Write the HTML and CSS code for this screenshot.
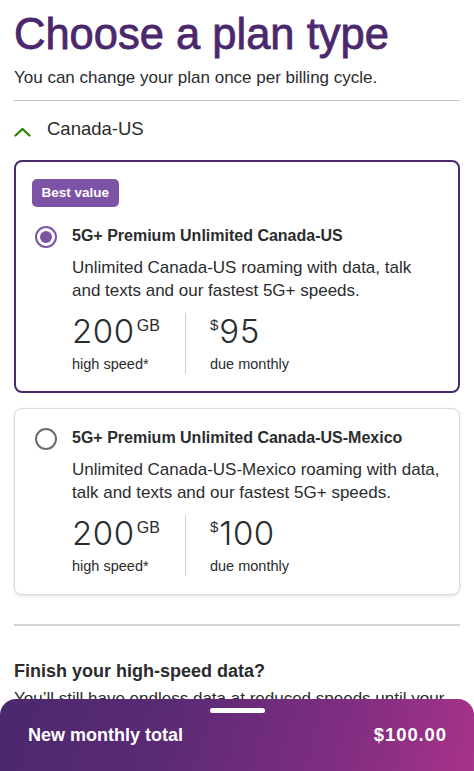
FILE: index.html
```html
<!DOCTYPE html>
<html lang="en">
<head>
<meta charset="utf-8">
<title>Choose a plan type</title>
<link rel="stylesheet" href="styles.css">
</head>
<body>
<main class="page">
  <h1 class="title">Choose a plan type</h1>
  <p class="subtitle">You can change your plan once per billing cycle.</p>
  <hr class="rule">
  <div class="acc-head">
    <svg class="chev" width="18" height="24" viewBox="0 0 18 24" aria-hidden="true">
      <path d="M1.5 18.5 L8.5 12 L15.5 18.5" fill="none" stroke="#2b8000" stroke-width="2.2" stroke-linecap="round" stroke-linejoin="round"/>
    </svg>
    <span class="acc-label">Canada-US</span>
  </div>

  <section class="card card-selected">
    <span class="badge">Best value</span>
    <div class="plan-row">
      <span class="radio radio-on"><span class="dot"></span></span>
      <div class="plan-body">
        <div class="plan-name">5G+ Premium Unlimited Canada-US</div>
        <p class="plan-desc">Unlimited Canada-US roaming with data, talk and texts and our fastest 5G+ speeds.</p>
        <div class="stats">
          <div class="stat stat-data">
            <div class="num">200<sup class="unit">GB</sup></div>
            <div class="lbl">high speed*</div>
          </div>
          <div class="stat stat-price">
            <div class="num"><sup class="cur">$</sup>95</div>
            <div class="lbl">due monthly</div>
          </div>
        </div>
      </div>
    </div>
  </section>

  <section class="card card-plain">
    <div class="plan-row">
      <span class="radio radio-off"></span>
      <div class="plan-body">
        <div class="plan-name">5G+ Premium Unlimited Canada-US-Mexico</div>
        <p class="plan-desc">Unlimited Canada-US-Mexico roaming with data, talk and texts and our fastest 5G+ speeds.</p>
        <div class="stats">
          <div class="stat stat-data">
            <div class="num">200<sup class="unit">GB</sup></div>
            <div class="lbl">high speed*</div>
          </div>
          <div class="stat stat-price">
            <div class="num"><sup class="cur">$</sup>100</div>
            <div class="lbl">due monthly</div>
          </div>
        </div>
      </div>
    </div>
  </section>

  <hr class="rule rule-thick">

  <h2 class="section-title">Finish your high-speed data?</h2>
  <p class="section-text">You’ll still have endless data at reduced speeds until your</p>
</main>

<footer class="sheet">
  <span class="handle"></span>
  <div class="sheet-row">
    <span class="sheet-label">New monthly total</span>
    <span class="sheet-total">$100.00</span>
  </div>
</footer>
</body>
</html>
```

FILE: styles.css
```css
* { box-sizing: border-box; }

html, body {
  margin: 0;
  padding: 0;
  background: #ffffff;
  overflow: hidden;
  height: 100%;
}

body {
  font-family: "Liberation Sans", Arial, sans-serif;
  color: #2a2c2e;
}

.page {
  padding: 0 14px;
}

.title {
  margin: 8px 0 0;
  font-size: 43.5px;
  line-height: 52px;
  font-weight: 400;
  color: #4b286d;
  -webkit-text-stroke: 0.8px #4b286d;
}

.subtitle {
  margin: 6px 0 0;
  font-size: 17px;
  line-height: 24px;
  color: #2a2c2e;
}

.rule {
  margin: 10px 0 0;
  border: 0;
  height: 1px;
  background: #c4c4c4;
}

.rule-thick {
  margin-top: 29px;
  height: 2px;
  background: #d4d4d4;
}

.acc-head {
  display: flex;
  align-items: center;
  gap: 15px;
  padding: 16px 0 19px;
}

.chev {
  display: block;
  flex: none;
}

.acc-label {
  font-size: 18.5px;
  line-height: 24px;
  color: #2a2c2e;
}

.card {
  border-radius: 8px;
  background: #fff;
}

.card-selected {
  border: 2px solid #4b286d;
  padding: 17px 16px 17px;
}

.card-plain {
  margin-top: 15px;
  border: 1px solid #dcdcdc;
  box-shadow: 0 1px 3px rgba(0, 0, 0, 0.14);
  padding: 17px 17px 18px;
}

.badge {
  display: inline-block;
  height: 28px;
  padding: 0 9.5px;
  border-radius: 5px;
  background: #7c53a5;
  color: #fff;
  font-size: 13.5px;
  font-weight: 700;
  line-height: 28px;
  margin-bottom: 17px;
}

.plan-row {
  display: flex;
  align-items: flex-start;
  gap: 15px;
}

.radio {
  flex: none;
  width: 22px;
  height: 22px;
  margin: 2px 0 0 3px;
  border-radius: 50%;
  display: flex;
  align-items: center;
  justify-content: center;
}

.radio-on {
  border: 2px solid #7c53a5;
}

.radio-on .dot {
  width: 12px;
  height: 12px;
  border-radius: 50%;
  background: #7c53a5;
}

.radio-off {
  border: 2px solid #6b6b6b;
}

.plan-body {
  flex: 1;
  min-width: 0;
}

.plan-name {
  font-size: 16px;
  line-height: 24px;
  font-weight: 700;
  color: #2a2c2e;
}

.plan-desc {
  margin: 8px 0 0;
  font-size: 17px;
  line-height: 23px;
  color: #2a2c2e;
}

.stats {
  display: flex;
  margin-top: 11px;
}

.stat {
  display: flex;
  flex-direction: column;
}

.stat-data {
  padding-right: 25px;
  border-right: 1px solid #cfcfcf;
}

.stat-price {
  padding-left: 24px;
}

.num {
  font-family: Inter, "Liberation Sans", sans-serif;
  font-weight: 300;
  font-size: 33px;
  line-height: 36px;
  letter-spacing: 0.6px;
  color: #2a2c2e;
  white-space: nowrap;
}

.unit, .cur {
  font-family: "Liberation Sans", Arial, sans-serif;
  font-weight: 400;
  line-height: 0;
  letter-spacing: 0;
  vertical-align: 0;
  position: relative;
}

.unit {
  font-size: 16px;
  top: -12.5px;
  margin-left: 2px;
}

.cur {
  font-size: 15px;
  top: -13px;
  margin-right: 1px;
}

.lbl {
  margin-top: 5px;
  font-size: 14.5px;
  line-height: 20px;
  color: #2a2c2e;
}

.section-title {
  margin: 33px 0 0;
  font-size: 18px;
  line-height: 24px;
  font-weight: 700;
  color: #2a2c2e;
}

.section-text {
  margin: 4px 0 0;
  font-size: 17px;
  line-height: 24px;
  white-space: nowrap;
  color: #2a2c2e;
}

.sheet {
  position: fixed;
  left: 0;
  right: 0;
  bottom: 0;
  height: 72px;
  border-radius: 16px 16px 0 0;
  background: linear-gradient(105deg, #4b286d 0%, #5a2a75 35%, #842e82 75%, #a8338a 100%);
  color: #fff;
  padding: 0 28px;
}

.handle {
  display: block;
  width: 55px;
  height: 5px;
  border-radius: 3px;
  background: #fff;
  margin: 9px auto 0;
}

.sheet-row {
  display: flex;
  justify-content: space-between;
  align-items: center;
  margin-top: 10px;
}

.sheet-label {
  font-size: 18px;
  line-height: 24px;
  font-weight: 700;
}

.sheet-total {
  font-size: 18.5px;
  line-height: 24px;
  font-weight: 700;
  letter-spacing: 0.9px;
  margin-right: -1px;
}
```
